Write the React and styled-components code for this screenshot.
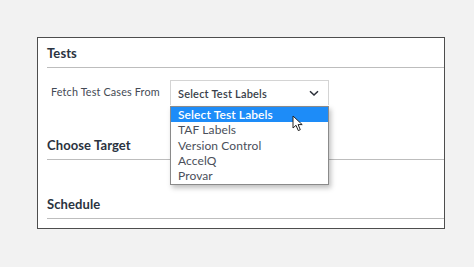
import React from "react";
import styled, { createGlobalStyle } from "styled-components";

const Global = createGlobalStyle`
  html, body {
    margin: 0;
    background: #f2f2f2;
    font-family: Lato, "Noto Sans", sans-serif;
  }
`

const Page = styled.div`
  padding: 37px 0 0 37px;
`

const Panel = styled.div`
  width: 397px;
  background: #ffffff;
  border: 1.5px solid #4d4d4d;
  padding: 0 0 9px 9px;
`

const Title = styled.div`
  height: 29px;
  display: flex;
  align-items: center;
  border-bottom: 1px solid #bdbdbd;
  font-size: 13px;
  font-weight: 700;
  color: #2b3340;
  letter-spacing: 0.1px;
`

const FormRow = styled.div`
  display: flex;
  align-items: flex-start;
  padding: 12px 0 0 4px;
  height: 50px;
`

const Label = styled.div`
  width: 119px;
  font-size: 10.8px;
  color: #444a55;
  line-height: 24px;
  letter-spacing: 0.15px;
`

const SelectWrap = styled.div`
  position: relative;
  width: 159px;
`

const SelectBox = styled.div`
  height: 25px;
  box-sizing: border-box;
  border: 1px solid #d4d4d4;
  border-bottom: none;
  display: flex;
  align-items: center;
  justify-content: space-between;
  padding: 1px 9px 0 7px;
  font-size: 11px;
  font-weight: 600;
  color: #3a3f4a;
  letter-spacing: 0.2px;
`

const List = styled.div`
  position: absolute;
  top: 26px;
  left: 0;
  width: 159px;
  box-sizing: border-box;
  background: #ffffff;
  border: 1px solid #8a8a8a;
  box-shadow: 2px 3px 5px rgba(0, 0, 0, 0.25);
  padding-bottom: 1px;
`

const Option = styled.div`
  height: 15.3px;
  line-height: 15.3px;
  padding-left: 7px;
  font-size: 12px;
  color: ${p => (p.$active ? "#ffffff" : "#4a4f5a")};
  background: ${p => (p.$active ? "#1d8cf8" : "transparent")};
  font-weight: ${p => (p.$active ? 600 : 400)};
  letter-spacing: 0.1px;
`

const Cursor = styled.svg`
  position: absolute;
  left: 121px;
  top: 8px;
`

const Gap = styled.div`
  height: 29px;
`

const Chevron = () => (
  <svg width="10" height="7" viewBox="0 0 10 7">
    <path d="M1 1.2 L5 5 L9 1.2" fill="none" stroke="#2b2f38" strokeWidth="1.5" />
  </svg>
)

const options = ["Select Test Labels", "TAF Labels", "Version Control", "AccelQ", "Provar"]

export default function App() {
  return (
    <>
      <Global />
      <Page>
        <Panel>
          <Title>Tests</Title>
          <FormRow>
            <Label>Fetch Test Cases From</Label>
            <SelectWrap>
              <SelectBox>
                Select Test Labels
                <Chevron />
              </SelectBox>
              <List>
                {options.map((o, i) => (
                  <Option key={o} $active={i === 0}>{o}</Option>
                ))}
                <Cursor width="12" height="17" viewBox="0 0 12 17">
                  <path
                    d="M1 1 L1 13 L4 10.3 L6.3 15.6 L8.3 14.7 L6.1 9.6 L10.2 9.6 Z"
                    fill="#ffffff"
                    stroke="#222"
                    strokeWidth="1"
                    strokeLinejoin="round"
                  />
                </Cursor>
              </List>
            </SelectWrap>
          </FormRow>
          <Title>Choose Target</Title>
          <Gap />
          <Title>Schedule</Title>
        </Panel>
      </Page>
    </>
  );
}
